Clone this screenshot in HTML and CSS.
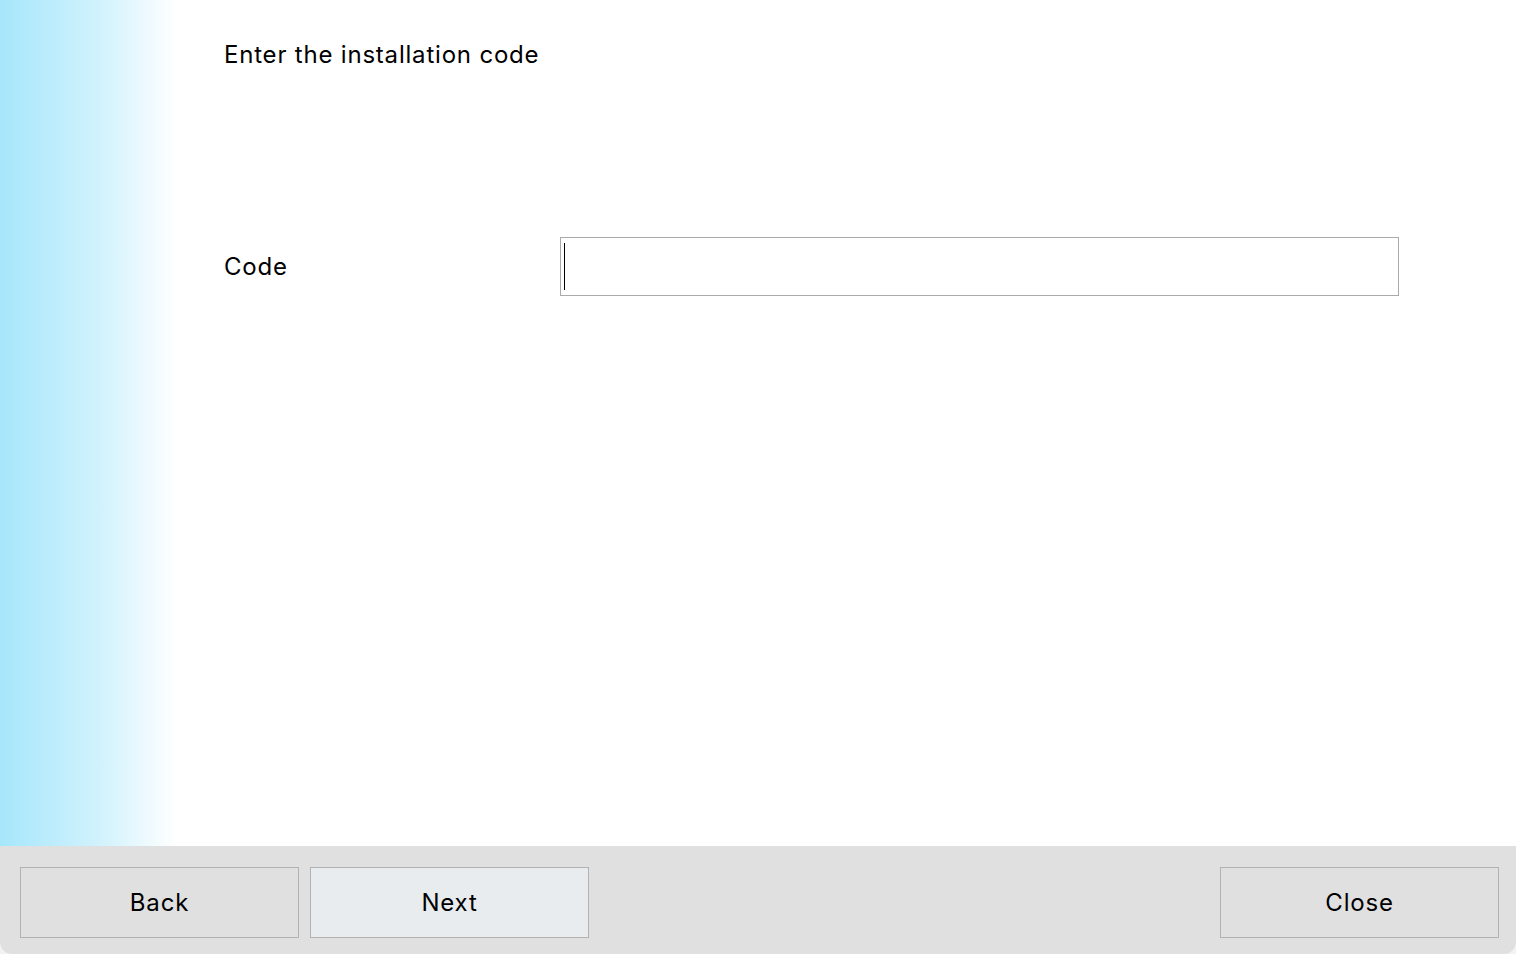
FILE: index.html
```html
<!DOCTYPE html>
<html lang="en">
<head>
    <meta charset="UTF-8">
    <meta name="viewport" content="width=device-width, initial-scale=1.0">
    <title>Installation code</title>
    <link rel="stylesheet" href="styles.css">
</head>
<body>
    <div class="window">
        <div class="main">
            <div class="sidebar"></div>
            <div class="content">
                <h1 class="title">Enter the installation code</h1>
                <div class="field">
                    <label class="label" for="code">Code</label>
                    <div class="input">
                        <span class="caret"></span>
                    </div>
                </div>
            </div>
        </div>
        <div class="footer">
            <button class="btn">Back</button>
            <button class="btn btn-next">Next</button>
            <div class="spacer"></div>
            <button class="btn">Close</button>
        </div>
    </div>
</body>
</html>
```

FILE: styles.css
```css
html, body {
    margin: 0;
    height: 100%;
}

body {
    font-family: Inter, "Noto Sans", sans-serif;
    background: #f2f2f2;
    color: #000;
}

.window {
    display: flex;
    flex-direction: column;
    height: 954px;
    background: #fff;
    border-radius: 0 0 12px 12px;
    overflow: hidden;
}

.main {
    flex: 1;
    display: flex;
}

.sidebar {
    width: 176px;
    background: linear-gradient(to right, #a6e6fb, #d4f3fd 60%, #fff);
}

.content {
    flex: 1;
    padding: 40px 117px 0 48px;
}

.title {
    margin: 0;
    font-size: 24px;
    font-weight: 400;
    line-height: 30px;
    letter-spacing: 0.8px;
}

.field {
    display: flex;
    align-items: center;
    margin-top: 167px;
}

.label {
    width: 336px;
    font-size: 24px;
    line-height: 30px;
    letter-spacing: 0.8px;
}

.input {
    flex: 1;
    height: 57px;
    border: 1px solid #aaa;
    display: flex;
    align-items: center;
    padding-left: 3px;
}

.caret {
    width: 1px;
    height: 47px;
    background: #000;
}

.footer {
    height: 108px;
    background: #e0e0e0;
    display: flex;
    align-items: flex-start;
    gap: 11px;
    padding: 21px 17px 0 20px;
    box-sizing: border-box;
}

.spacer {
    flex: 1;
}

.btn {
    width: 279px;
    height: 71px;
    border: 1px solid #b2b2b2;
    background: #e0e0e0;
    font-family: Inter, "Noto Sans", sans-serif;
    font-size: 24px;
    letter-spacing: 0.8px;
    color: #000;
    padding: 0;
}

.btn-next {
    background: #e8ecef;
}
```
